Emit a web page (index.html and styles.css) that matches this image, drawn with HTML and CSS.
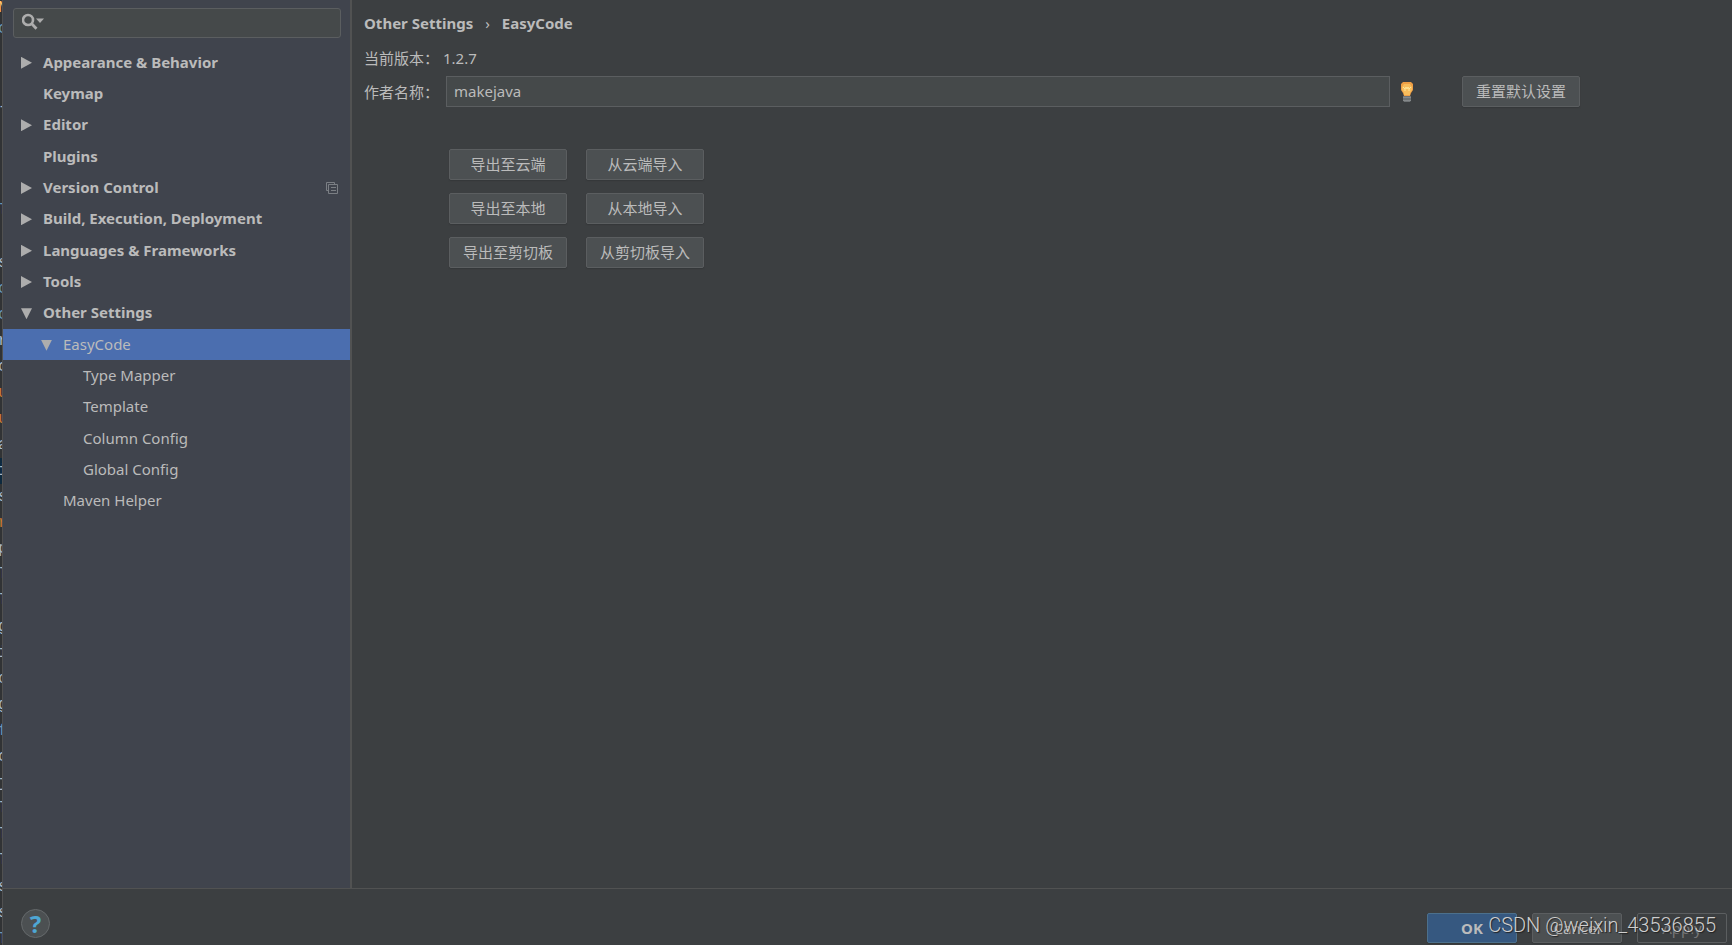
FILE: index.html
```
<!DOCTYPE html>
<html lang="zh-CN">
<head>
  <meta charset="UTF-8">
  <meta name="viewport" content="width=device-width, initial-scale=1.0">
  <title>Settings - EasyCode</title>
  <link rel="stylesheet" href="styles.css">
</head>
<body>
  <!-- edge of the editor behind the dialog -->
  <div class="editor-edge" aria-hidden="true">
    <span class="str">N</span><span class="num">c</span><span></span><span></span><span>-</span><span></span><span></span><span></span><span class="num">l</span><span></span>
    <span>s</span><span class="num">c</span><span class="num">c</span><span>r</span><span>c</span><span class="key">u</span><span class="key">u</span><span>a</span><span class="caret">i</span><span>s</span>
    <span class="key">r</span><span>p</span><span>l</span><span>l</span><span>g</span><span>i</span><span>o</span><span>g</span><span class="num">f</span><span>c</span>
    <span>j</span><span>l</span><span>l</span><span>l</span><span>s</span><span>s</span><span class="num">T</span>
  </div>

  <div class="dialog">
    <div class="content">
      <nav class="sidebar">
        <div class="search">
          <svg class="search-icon" width="24" height="18" viewBox="0 0 24 18" aria-hidden="true">
            <circle cx="6" cy="7" r="5" fill="none" stroke="#adadad" stroke-width="2.6"/>
            <path d="M9.500 10.500l5 5.200" stroke="#adadad" stroke-width="2.8"/>
            <path d="M14 5.500h8l-4 4.500z" fill="#adadad"/>
          </svg>
          <input type="text" aria-label="Search settings">
        </div>
        <ul class="tree">
          <li class="group closed"><a href="#">Appearance &amp; Behavior</a></li>
          <li class="group"><a href="#">Keymap</a></li>
          <li class="group closed"><a href="#">Editor</a></li>
          <li class="group"><a href="#">Plugins</a></li>
          <li class="group closed">
            <a href="#">Version Control</a>
            <svg class="project-icon" width="12" height="12" viewBox="0 0 12 12" aria-hidden="true">
              <path d="M2.500 8.500h-2v-8h8v2M2.500 2.500h9v9h-9zM5 5.500h5M5 8.500h5" fill="none" stroke="#7b7f84"/>
            </svg>
          </li>
          <li class="group closed"><a href="#">Build, Execution, Deployment</a></li>
          <li class="group closed"><a href="#">Languages &amp; Frameworks</a></li>
          <li class="group closed"><a href="#">Tools</a></li>
          <li class="group open"><a href="#">Other Settings</a></li>
          <li class="level-2 open selected"><a href="#" aria-current="page">EasyCode</a></li>
          <li class="level-3"><a href="#">Type Mapper</a></li>
          <li class="level-3"><a href="#">Template</a></li>
          <li class="level-3"><a href="#">Column Config</a></li>
          <li class="level-3"><a href="#">Global Config</a></li>
          <li class="level-2"><a href="#">Maven Helper</a></li>
        </ul>
      </nav>

      <main class="panel">
        <h1 class="breadcrumb"><span>Other Settings</span><span class="sep">›</span><span>EasyCode</span></h1>
        <div class="version"><span>当前版本：</span><span>1.2.7</span></div>
        <div class="author">
          <label for="author">作者名称：</label>
          <input id="author" type="text" value="makejava">
          <svg class="bulb" width="14" height="20" viewBox="0 0 14 20" aria-hidden="true">
            <path d="M3 0h8l2 2v6l-2 3-1 3H4l-1-3-2-3V2z" fill="#ef9f45"/>
            <path d="M4 2h6l2 3v3l-2 3v2H4v-2L2 8V5z" fill="#f8bd5c"/>
            <path d="M3 5l2 2 1-2 1 2 1-2 1 2 2-2M5 7v2M9 7v2" fill="none" stroke="#ffe79a"/>
            <path d="M3 14h8v4l-1 2H4l-1-2z" fill="#6f7375"/>
            <path d="M3 15.500h8M3 18.500h8" stroke="#85898b"/>
          </svg>
          <button type="button" class="btn">重置默认设置</button>
        </div>
        <div class="transfer">
          <button type="button" class="btn">导出至云端</button>
          <button type="button" class="btn">从云端导入</button>
          <button type="button" class="btn">导出至本地</button>
          <button type="button" class="btn">从本地导入</button>
          <button type="button" class="btn">导出至剪切板</button>
          <button type="button" class="btn">从剪切板导入</button>
        </div>
      </main>
    </div>

    <footer class="footer">
      <button type="button" class="help" aria-label="Help">?</button>
      <div class="actions">
        <button type="button" class="btn primary">OK</button>
        <button type="button" class="btn">Cancel</button>
        <button type="button" class="btn" disabled>Apply</button>
      </div>
      <div class="watermark">CSDN @weixin_43536855</div>
    </footer>
  </div>
</body>
</html>
```
FILE: styles.css
```
:root {
  --bg: #3c3f41;
  --side-bg: #40444d;
  --field-bg: #45494a;
  --btn-bg: #4c5052;
  --line: #515252;
  --border: #5b5e60;
  --text: #bbbbbb;
  --select: #4b6eaf;
}
* { box-sizing: border-box; margin: 0; padding: 0; }
body {
  display: flex;
  height: 100vh;
  overflow: hidden;
  background: var(--bg);
  color: var(--text);
  font: 15px/20px "Noto Sans", "Noto Sans CJK SC", sans-serif;
}
input, button { font: inherit; color: inherit; }
a { color: inherit; text-decoration: none; }

.editor-edge {
  flex: none;
  display: flex;
  flex-direction: column;
  width: 3px;
  overflow: hidden;
  background: #313335;
  border-right: 1px solid #515151;
  font: 16px/26px "Liberation Mono", monospace;
  text-indent: -2px;
  color: #a9b7c6;
}
.editor-edge span { flex: none; height: 26px; }
.editor-edge .key { color: #cc7832; }
.editor-edge .num { color: #6897bb; }
.editor-edge .str { color: #ffc66d; }
.editor-edge .caret { background: #0d293e; }
.editor-edge span:first-child { height: 16px; line-height: 16px; }

.dialog {
  flex: 1;
  display: flex;
  flex-direction: column;
  min-width: 0;
}
.content {
  flex: 1;
  display: flex;
  min-height: 0;
}

.sidebar {
  flex: none;
  width: 349px;
  padding-top: 8px;
  background: var(--side-bg);
  border-right: 2px solid var(--line);
}
.search {
  display: flex;
  align-items: center;
  height: 30px;
  margin: 0 9px 9px 10px;
  padding: 0 8px;
  background: var(--field-bg);
  border: 1px solid var(--border);
  border-radius: 3px;
}
.search-icon { margin-bottom: 2px; }
.search input {
  flex: 1;
  min-width: 0;
  background: none;
  border: none;
  outline: none;
}
.tree {
  display: grid;
  grid-auto-rows: 1fr;
  height: 470px;
  list-style: none;
}
.tree li {
  display: flex;
  align-items: center;
  padding: 0 12px 0 18px;
}
.tree a { margin-bottom: 2px; }
.tree li::before {
  content: "";
  flex: none;
  width: 11px;
  height: 12px;
  margin-right: 11px;
}
.tree .closed::before {
  background: #adadad;
  clip-path: polygon(0 0, 100% 50%, 0 100%);
}
.tree .open::before {
  height: 11px;
  margin-top: 1px;
  background: #adadad;
  clip-path: polygon(0 0, 100% 0, 50% 100%);
}
.tree .group { font-weight: bold; }
.tree .level-2 { padding-left: 38px; }
.tree .level-3 { padding-left: 58px; }
.tree .selected { background: var(--select); }
.project-icon { margin-left: auto; }

.panel {
  flex: 1;
  min-width: 0;
  padding: 13px 152px 0 12px;
}
.breadcrumb {
  display: flex;
  font-size: 15px;
  margin-bottom: 15px;
}
.breadcrumb .sep { margin: 0 12px; font-weight: normal; }
.version {
  display: flex;
  gap: 4px;
  margin-bottom: 8px;
}
.author {
  display: flex;
  align-items: center;
}
.author label { margin-right: 7px; }
.author input {
  flex: 1;
  min-width: 0;
  height: 31px;
  padding: 0 7px 1px;
  background: var(--field-bg);
  border: 1px solid var(--border);
}
.bulb { margin: 0 48px 0 10px; }
.transfer {
  display: grid;
  grid-template-columns: repeat(2, max-content);
  gap: 13px 19px;
  margin: 42px 0 0 85px;
}

.btn {
  width: 118px;
  height: 31px;
  padding-bottom: 1px;
  background: var(--btn-bg);
  border: 1px solid var(--border);
  border-radius: 2px;
  box-shadow: 0 1px 1px #35383a;
}
.btn:disabled {
  background: none;
  color: #777777;
  box-shadow: none;
}
.btn.primary {
  background: #365880;
  border-color: #4c708c;
  font-weight: bold;
}

.footer {
  position: relative;
  flex: none;
  display: flex;
  justify-content: space-between;
  align-items: flex-start;
  height: 57px;
  padding: 20px 5px 0 18px;
  border-top: 1px solid var(--line);
}
.help {
  width: 29px;
  height: 29px;
  background: var(--btn-bg);
  border: 1px solid #65696b;
  border-radius: 50%;
  color: #4ea6d4;
  font-size: 24px;
  font-weight: bold;
  line-height: 26px;
}
.actions {
  display: flex;
  gap: 15px;
  padding-top: 4px;
}
.actions .btn { width: 90px; height: 30px; }
.watermark {
  position: absolute;
  right: 16px;
  bottom: 7px;
  color: #cfcfcf;
  font: 300 20px/26px Roboto, sans-serif;
  text-shadow: 1px 1px 1px #222222;
}
```
